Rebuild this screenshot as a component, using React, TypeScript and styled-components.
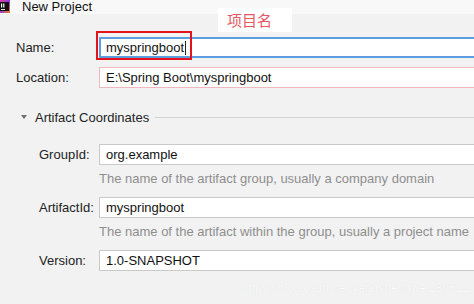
import styled, { createGlobalStyle } from 'styled-components';

const GlobalStyle = createGlobalStyle`
  html, body {
    margin: 0;
    padding: 0;
    background: #f2f2f2;
  }
  * {
    box-sizing: border-box;
  }
`;

type TField = {
  label: string;
  value: string;
  hint?: string;
}

const artifactFields: TField[] = [
  { label: 'GroupId:', value: 'org.example', hint: 'The name of the artifact group, usually a company domain' },
  { label: 'ArtifactId:', value: 'myspringboot', hint: 'The name of the artifact within the group, usually a project name' },
  { label: 'Version:', value: '1.0-SNAPSHOT' },
];

const AppIcon = () => (
  <svg width="12" height="13" viewBox="0 0 12 13">
    <defs>
      <linearGradient id="ij" x1="0" y1="0" x2="1" y2="1">
        <stop offset="0" stopColor="#fc3d8c" />
        <stop offset="0.5" stopColor="#8a3ce6" />
        <stop offset="1" stopColor="#f97a12" />
      </linearGradient>
    </defs>
    <rect x="0" y="0" width="12" height="13" fill="url(#ij)" />
    <rect x="2" y="2" width="9" height="9" fill="#111" />
    <rect x="3" y="3.5" width="1.2" height="4" fill="#fff" />
    <rect x="5.2" y="3.5" width="1.2" height="4" fill="#fff" />
    <rect x="3" y="9" width="4" height="0.9" fill="#fff" />
  </svg>
);

const App = (): JSX.Element => {
  return (
    <Window>
      <GlobalStyle />
      <TitleBar>
        <IconSlot><AppIcon /></IconSlot>
        <Title>New Project</Title>
      </TitleBar>

      <Annotation>项目名</Annotation>

      <Form>
        <Row $indent={16}>
          <Label $width={83}>Name:</Label>
          <InputWrap>
            <Input $variant="focus">
              myspringboot
              <Caret />
            </Input>
            <Highlight />
          </InputWrap>
        </Row>
        <Row $indent={16} $gap={9}>
          <Label $width={83}>Location:</Label>
          <Input $variant="error">E:\Spring Boot\myspringboot</Input>
        </Row>

        <SectionHeader>
          <Triangle />
          <SectionTitle>Artifact Coordinates</SectionTitle>
          <SectionRule />
        </SectionHeader>

        <Fields>
          {artifactFields.map((field) => (
            <Field key={field.label}>
              <Row $indent={39}>
                <Label $width={60}>{field.label}</Label>
                <Input>{field.value}</Input>
              </Row>
              {!!field.hint && <Hint>{field.hint}</Hint>}
            </Field>
          ))}
        </Fields>
      </Form>

      <Watermark>https://blog.csdn.net/yangshengwei230612</Watermark>
    </Window>
  );
};

const Window = styled.div`
  position: relative;
  width: 474px;
  height: 304px;
  overflow: hidden;
  background: #f2f2f2;
  font-family: "Liberation Sans", Arial, sans-serif;
  font-size: 13px;
  color: #1e1e1e;
`;

const TitleBar = styled.div`
  display: flex;
  align-items: center;
  height: 14px;
  background: #f8f8f8;
`;

const IconSlot = styled.div`
  display: flex;
  margin-left: -2px;
  margin-top: -1px;
  width: 12px;
`;

const Title = styled.span`
  margin-left: 12px;
  font-size: 13px;
  line-height: 14px;
  color: #111;
`;

const Annotation = styled.div`
  position: absolute;
  left: 218px;
  top: 8px;
  width: 74px;
  height: 24px;
  padding-left: 9px;
  background: #fff;
  color: #e55763;
  font-family: "Noto Sans CJK SC", sans-serif;
  font-size: 15px;
  line-height: 24px;
`;

const Form = styled.div`
  display: flex;
  flex-direction: column;
  padding-top: 23px;
`;

const Row = styled.div<{ $indent: number; $gap?: number }>`
  display: flex;
  align-items: center;
  padding-left: ${({ $indent }) => $indent}px;
  margin-top: ${({ $gap }) => $gap ?? 0}px;
`;

const Label = styled.span<{ $width: number }>`
  flex: 0 0 ${({ $width }) => $width}px;
  font-size: 13px;
  color: #222;
`;

const InputWrap = styled.div`
  position: relative;
  flex: 1;
  display: flex;
`;

const Input = styled.div<{ $variant?: 'focus' | 'error' }>`
  position: relative;
  flex: 1;
  height: 21px;
  display: flex;
  align-items: center;
  background: #fff;
  color: #111;
  white-space: nowrap;
  border: ${({ $variant }) =>
    $variant === 'focus' ? '2px solid #5c9ee0'
      : $variant === 'error' ? '1px solid #f1b7be'
      : '1px solid #c9c9c9'};
  border-right: none;
  padding-left: ${({ $variant }) => ($variant === 'focus' ? 5 : 6)}px;
`;

const Caret = styled.span`
  display: inline-block;
  width: 1px;
  height: 14px;
  margin-left: 1px;
  background: #222;
`;

const Highlight = styled.div`
  position: absolute;
  left: -3px;
  top: -6px;
  width: 96px;
  height: 29px;
  border: 2.5px solid #e3121c;
  pointer-events: none;
`;

const SectionHeader = styled.div`
  display: flex;
  align-items: center;
  height: 16px;
  margin-top: 21px;
  padding-left: 21px;
`;

const Triangle = styled.span`
  width: 0;
  height: 0;
  border-left: 3px solid transparent;
  border-right: 3px solid transparent;
  border-top: 4px solid #6e6e6e;
`;

const SectionTitle = styled.span`
  margin-left: 8px;
  color: #222;
`;

const SectionRule = styled.span`
  flex: 1;
  height: 1px;
  margin-left: 6px;
  background: #d2d2d2;
`;

const Fields = styled.div`
  display: flex;
  flex-direction: column;
  gap: 10px;
  margin-top: 19px;
`;

const Field = styled.div`
  display: flex;
  flex-direction: column;
`;

const Hint = styled.div`
  margin-top: 6px;
  padding-left: 99px;
  line-height: 16px;
  color: #8e8e8e;
  white-space: nowrap;
`;

const Watermark = styled.div`
  position: absolute;
  right: 5px;
  top: 281px;
  color: #f9f9f9;
  text-shadow: 0 0 1px #dedede;
  font-size: 12px;
  line-height: 15px;
  white-space: nowrap;
`;

export default App;
